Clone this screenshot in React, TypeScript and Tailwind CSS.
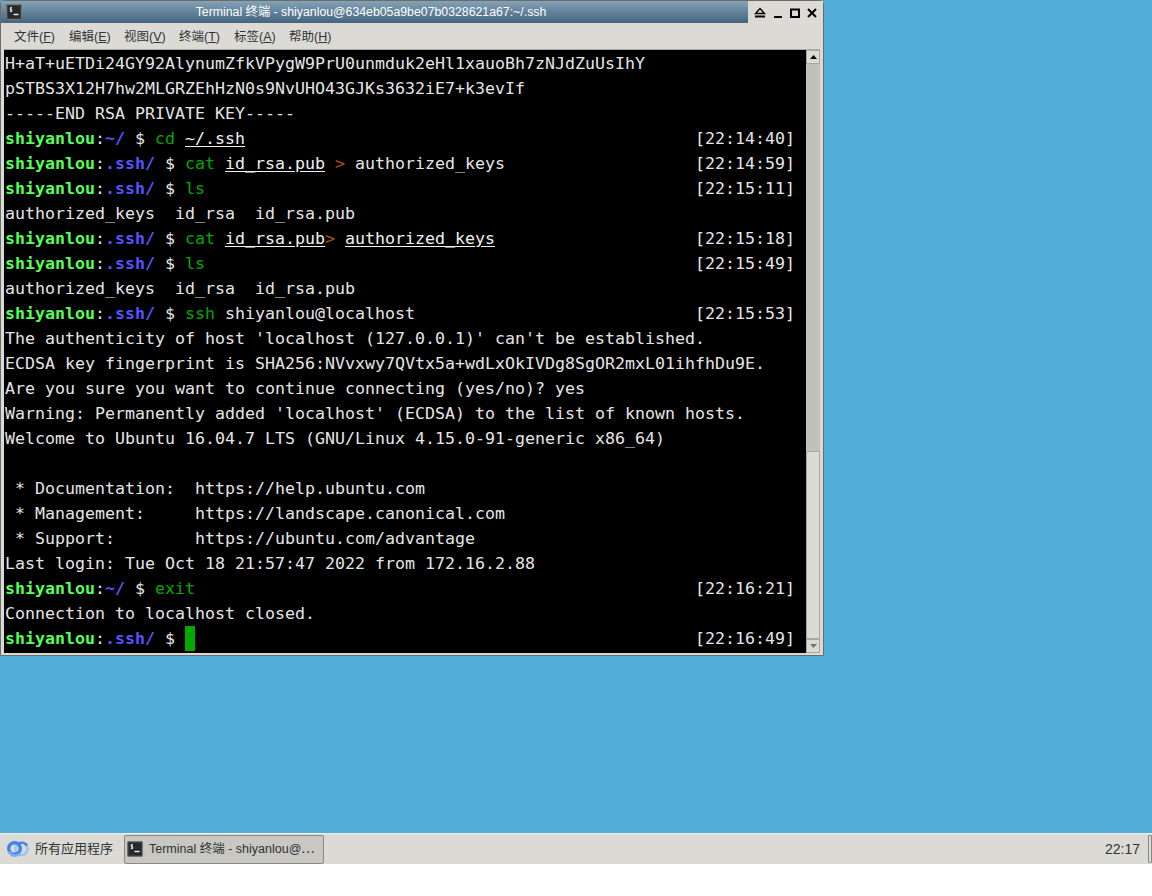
import type { ReactNode } from "react";

const P = ({ dir }: { dir: string }) => (
  <>
    <span className="font-bold text-[#55ff55]">shiyanlou</span>
    <span className="text-[#e5e5e5]">:</span>
    <span className="font-bold text-[#5454ff]">{dir}</span>
    <span className="text-[#e5e5e5]"> $ </span>
  </>
);

const Cmd = ({ children }: { children: ReactNode }) => <span className="text-[#00a800]">{children}</span>;
const Arg = ({ children }: { children: ReactNode }) => <span className="text-[#f0f0f0] underline underline-offset-2">{children}</span>;
const Op = ({ children }: { children: ReactNode }) => <span className="text-[#a85400]">{children}</span>;

const Line = ({ children, time }: { children?: ReactNode; time?: string }) => (
  <div className="flex h-[25px] w-[790px] justify-between whitespace-pre leading-[25px]">
    <span>{children}</span>
    {time && <span>[{time}]</span>}
  </div>
);

const TermIcon = () => (
  <svg width="16" height="16" viewBox="0 0 16 16" className="shrink-0">
    <rect x="0.5" y="0.5" width="15" height="15" rx="1" fill="#26292b" stroke="#73736f" />
    <rect x="1.5" y="1.5" width="13" height="13" fill="none" stroke="#3d4042" />
    <path d="M6 3.8H4.2V5.6H5.8V7.4H3.8M4.9 3v5.2" stroke="#f2f2f0" strokeWidth="0.9" fill="none" />
    <path d="M7.5 10.5h5" stroke="#f2f2f0" strokeWidth="1.4" />
  </svg>
);

const menuItems: [string, string][] = [
  ["文件", "F"],
  ["编辑", "E"],
  ["视图", "V"],
  ["终端", "T"],
  ["标签", "A"],
  ["帮助", "H"],
];

export default function App() {
  return (
    <div className="flex h-screen w-full flex-col overflow-hidden bg-white font-['Liberation_Sans','Noto_Sans_CJK_SC',sans-serif]">
      <div className="relative flex-1 bg-[#52aed9]">
        {/* window */}
        <div className="absolute left-0 top-0 flex h-[656px] w-[824px] flex-col rounded-t-[4px] border border-[#6b6b68] bg-[#dcdad5]">
          <div className="flex h-[22px] shrink-0 items-center rounded-t-[3px] bg-gradient-to-b from-[#85a2b6] to-[#44647f] pl-[5px]">
            <TermIcon />
            <div className="flex-1 pr-[28px] text-center text-[12.3px] text-white">
              Terminal 终端 - shiyanlou@634eb05a9be07b0328621a67:~/.ssh
            </div>
            <div className="flex h-full w-[75px] items-center justify-center gap-[5px] bg-[#dcdad5] pt-[2px] text-black">
              <svg width="14" height="12" viewBox="0 0 14 12">
                <path d="M7 1.5L11.5 6.5H2.5Z" fill="none" stroke="#000" strokeWidth="1.4" />
                <path d="M2 9.5h10" stroke="#000" strokeWidth="2" />
              </svg>
              <svg width="12" height="12" viewBox="0 0 12 12">
                <path d="M2 10h8" stroke="#000" strokeWidth="2" />
              </svg>
              <svg width="12" height="12" viewBox="0 0 12 12">
                <rect x="2" y="2.5" width="8" height="7.5" fill="none" stroke="#000" strokeWidth="2" />
              </svg>
              <svg width="12" height="12" viewBox="0 0 12 12">
                <path d="M2 2l8 8M10 2l-8 8" stroke="#000" strokeWidth="2" />
              </svg>
            </div>
          </div>

          <div className="flex h-[26px] shrink-0 items-center pl-[13px] pt-[2px] text-[12.5px] text-[#2e3436]">
            {menuItems.map(([name, key]) => (
              <span key={key} className="w-[55px]">
                {name}(<span className="underline">{key}</span>)
              </span>
            ))}
          </div>

          <div className="flex min-h-0 flex-1 pb-[2px] pl-[3px] pr-[2px]">
            <div className="flex-1 overflow-hidden border-t border-[#a9a7a1] bg-black pl-px pt-px font-['DejaVu_Sans_Mono',monospace] text-[16.62px] text-[#e5e5e5]">
              <Line>H+aT+uETDi24GY92AlynumZfkVPygW9PrU0unmduk2eHl1xauoBh7zNJdZuUsIhY</Line>
              <Line>pSTBS3X12H7hw2MLGRZEhHzN0s9NvUHO43GJKs3632iE7+k3evIf</Line>
              <Line>-----END RSA PRIVATE KEY-----</Line>
              <Line time="22:14:40">
                <P dir="~/" />
                <Cmd>cd</Cmd> <Arg>~/.ssh</Arg>
              </Line>
              <Line time="22:14:59">
                <P dir=".ssh/" />
                <Cmd>cat</Cmd> <Arg>id_rsa.pub</Arg> <Op>&gt;</Op> authorized_keys
              </Line>
              <Line time="22:15:11">
                <P dir=".ssh/" />
                <Cmd>ls</Cmd>
              </Line>
              <Line>authorized_keys  id_rsa  id_rsa.pub</Line>
              <Line time="22:15:18">
                <P dir=".ssh/" />
                <Cmd>cat</Cmd> <Arg>id_rsa.pub</Arg>
                <Op>&gt;</Op> <Arg>authorized_keys</Arg>
              </Line>
              <Line time="22:15:49">
                <P dir=".ssh/" />
                <Cmd>ls</Cmd>
              </Line>
              <Line>authorized_keys  id_rsa  id_rsa.pub</Line>
              <Line time="22:15:53">
                <P dir=".ssh/" />
                <Cmd>ssh</Cmd> shiyanlou@localhost
              </Line>
              <Line>The authenticity of host 'localhost (127.0.0.1)' can't be established.</Line>
              <Line>ECDSA key fingerprint is SHA256:NVvxwy7QVtx5a+wdLxOkIVDg8SgOR2mxL01ihfhDu9E.</Line>
              <Line>Are you sure you want to continue connecting (yes/no)? yes</Line>
              <Line>Warning: Permanently added 'localhost' (ECDSA) to the list of known hosts.</Line>
              <Line>Welcome to Ubuntu 16.04.7 LTS (GNU/Linux 4.15.0-91-generic x86_64)</Line>
              <Line> </Line>
              <Line> * Documentation:  https://help.ubuntu.com</Line>
              <Line> * Management:     https://landscape.canonical.com</Line>
              <Line> * Support:        https://ubuntu.com/advantage</Line>
              <Line>Last login: Tue Oct 18 21:57:47 2022 from 172.16.2.88</Line>
              <Line time="22:16:21">
                <P dir="~/" />
                <Cmd>exit</Cmd>
              </Line>
              <Line>Connection to localhost closed.</Line>
              <Line time="22:16:49">
                <P dir=".ssh/" />
                <span className="inline-block h-[25px] w-[10px] bg-[#00a800] align-top" />
              </Line>
            </div>

            {/* scrollbar */}
            <div className="mr-[1px] flex w-[14px] shrink-0 flex-col border-t border-[#a9a7a1] bg-[#c2c0ba]">
              <div className="flex h-[14px] items-center justify-center border border-[#a9a7a1] bg-[#dcdad5]">
                <svg width="7" height="4" viewBox="0 0 7 4">
                  <path d="M3.5 0L7 4H0Z" fill="#000" />
                </svg>
              </div>
              <div className="flex-1" />
              <div className="h-[188px] border border-[#a9a7a1] bg-[#dcdad5]" />
              <div className="flex h-[14px] items-center justify-center border border-[#a9a7a1] bg-[#dcdad5]">
                <svg width="7" height="4" viewBox="0 0 7 4">
                  <path d="M0 0H7L3.5 4Z" fill="#77756f" />
                </svg>
              </div>
            </div>
          </div>
        </div>
      </div>

      {/* panel */}
      <div className="flex h-[31px] shrink-0 items-center border-t border-[#ececea] bg-[#dcdad5] text-[12.5px] text-[#2e3436]">
        <div className="flex h-full w-[124px] shrink-0 items-center gap-[5px] pl-[7px]">
          <svg width="23" height="18" viewBox="0 0 23 18" className="shrink-0">
            <circle cx="14.5" cy="9" r="6" fill="none" stroke="#9cc3f2" strokeWidth="2.6" />
            <circle cx="7.5" cy="8.5" r="5.8" fill="none" stroke="#3f83e6" strokeWidth="3.4" />
            <path d="M2 11.5a6.5 6.5 0 0 0 11 2" fill="none" stroke="#7fb0ee" strokeWidth="2.6" />
            <path d="M12 3.5a6 6 0 0 1 8 2" fill="none" stroke="#3f83e6" strokeWidth="2.6" />
          </svg>
          <span className="text-[13px]">所有应用程序</span>
        </div>
        <div className="flex h-[29px] w-[200px] shrink-0 items-center gap-[6px] rounded-[2px] border border-[#8a8984] bg-[#c9c7c2] pl-[2px]">
          <TermIcon />
          <span className="whitespace-nowrap">Terminal 终端 - shiyanlou@⋯</span>
        </div>
        <div className="flex-1" />
        <span className="mr-[8px] text-[14px]">22:17</span>
        <div className="h-[28px] w-[4px] rounded-[1px] border border-[#8a8984]" />
      </div>
      <div className="h-[32px] shrink-0 bg-white" />
    </div>
  );
}
